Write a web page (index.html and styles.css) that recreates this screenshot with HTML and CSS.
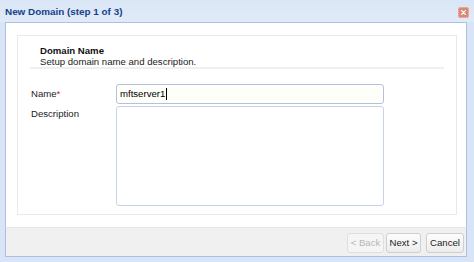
FILE: index.html
```html
<!DOCTYPE html>
<html>
<head>
<meta charset="utf-8">
<link rel="stylesheet" href="styles.css">
</head>
<body>
<div class="win">
  <div class="titlebar">
    <span class="title">New Domain (step 1 of 3)</span>
    <span class="close"><svg width="11" height="11" viewBox="0 0 11 11"><path d="M3.2 3.2 L7.8 7.8 M7.8 3.2 L3.2 7.8" stroke="#fff" stroke-width="1.6" stroke-linecap="round"/></svg></span>
  </div>
  <div class="body">
    <div class="panel">
      <div class="head">
        <div class="h-title">Domain Name</div>
        <div class="h-sub">Setup domain name and description.</div>
      </div>
      <div class="form">
        <div class="row">
          <label class="lbl">Name<span class="req">*</span></label>
          <div class="input">mftserver1<span class="caret"></span></div>
        </div>
        <div class="row top">
          <label class="lbl desc">Description</label>
          <div class="textarea"></div>
        </div>
      </div>
    </div>
  </div>
  <div class="footer">
    <button class="btn back disabled">&lt; Back</button>
    <button class="btn next">Next &gt;</button>
    <button class="btn cancel">Cancel</button>
  </div>
</div>
</body>
</html>
```
FILE: styles.css
```css
html, body { margin: 0; padding: 0; }
body {
  width: 474px; height: 262px; overflow: hidden;
  font-family: "Liberation Sans", Arial, sans-serif;
  font-size: 9.6px;
  background: #d6e3f4;
}
.win {
  box-sizing: border-box;
  width: 474px; height: 262px;
  background: #d9e5f6;
  padding: 0 7px 5px 5px;
  display: flex; flex-direction: column;
}
.titlebar {
  height: 22px;
  flex: none;
  display: flex; align-items: center; justify-content: space-between;
  background: linear-gradient(#dae6f6, #e1eaf8);
  margin: 0 -7px 0 -5px;
  padding: 0 5px 0 5px;
}
.title { font-weight: bold; color: #15428b; font-size: 9.9px; margin-top: 1px; }
.close {
  box-sizing: border-box;
  width: 11px; height: 11px; border-radius: 2px;
  background: #d98a76;
  border: 1px solid #e6a898;
  display: flex; align-items: center; justify-content: center;
  margin-top: 2px;
}
.close svg { width: 9px; height: 9px; }
.body {
  flex: 1;
  background: #fff;
  border: 1px solid #a9c1e6;
  border-bottom: none;
  padding: 12px 9px 12px 11px;
  display: flex; flex-direction: column;
}
.panel {
  flex: 1;
  border: 1px solid #e9e9e9;
}
.head {
  padding: 9px 0 0 10px;
  margin: 0 12px 15px 12px;
  border-bottom: 2px solid #efefef;
}
.h-title { font-weight: bold; color: #111; line-height: 11px; }
.h-sub { color: #222; line-height: 11px; }
.form { display: flex; flex-direction: column; gap: 2px; padding-left: 13px; }
.row { display: flex; align-items: center; }
.row.top { align-items: flex-start; }
.lbl { width: 85px; color: #222; line-height: 12px; }
.lbl.desc { padding-top: 2px; }
.req { color: #c0282d; }
.input {
  box-sizing: border-box;
  width: 268px; height: 20px;
  border: 1px solid #b3c0e0; border-radius: 3px;
  background: #fffffa;
  padding: 0 3px; color: #000;
  display: flex; align-items: center;
  line-height: 12px;
}
.caret { display: inline-block; width: 1px; height: 12px; background: #000; margin-left: 1px; }
.textarea {
  box-sizing: border-box;
  width: 268px; height: 100px;
  border: 1px solid #c6d3ec; border-radius: 3px;
  background: #fff;
}
.footer {
  flex: none;
  height: 28px;
  background: #f0f0f0;
  border-left: 1px solid #a9c1e6; border-right: 1px solid #a9c1e6;
  border-bottom: 1px solid #a9c1e6;
  border-top: 1px solid #e6e6e6;
  display: flex; justify-content: flex-end; align-items: center;
  padding-right: 2px;
}
.btn {
  font-family: "Liberation Sans", Arial, sans-serif;
  font-size: 9.6px;
  height: 20px; padding: 0;
  margin: 1px 0 0 0;
  border: 1px solid #cfcfcf; border-radius: 3px;
  background: linear-gradient(#fdfdfd, #ececec);
  color: #222;
  text-align: center;
}
.btn.back { width: 37px; }
.btn.next { width: 35px; margin-left: 2px; }
.btn.cancel { width: 38px; margin-left: 5px; }
.btn.disabled { color: #b5b5b5; border-color: #dedede; background: #f5f5f5; }
```
